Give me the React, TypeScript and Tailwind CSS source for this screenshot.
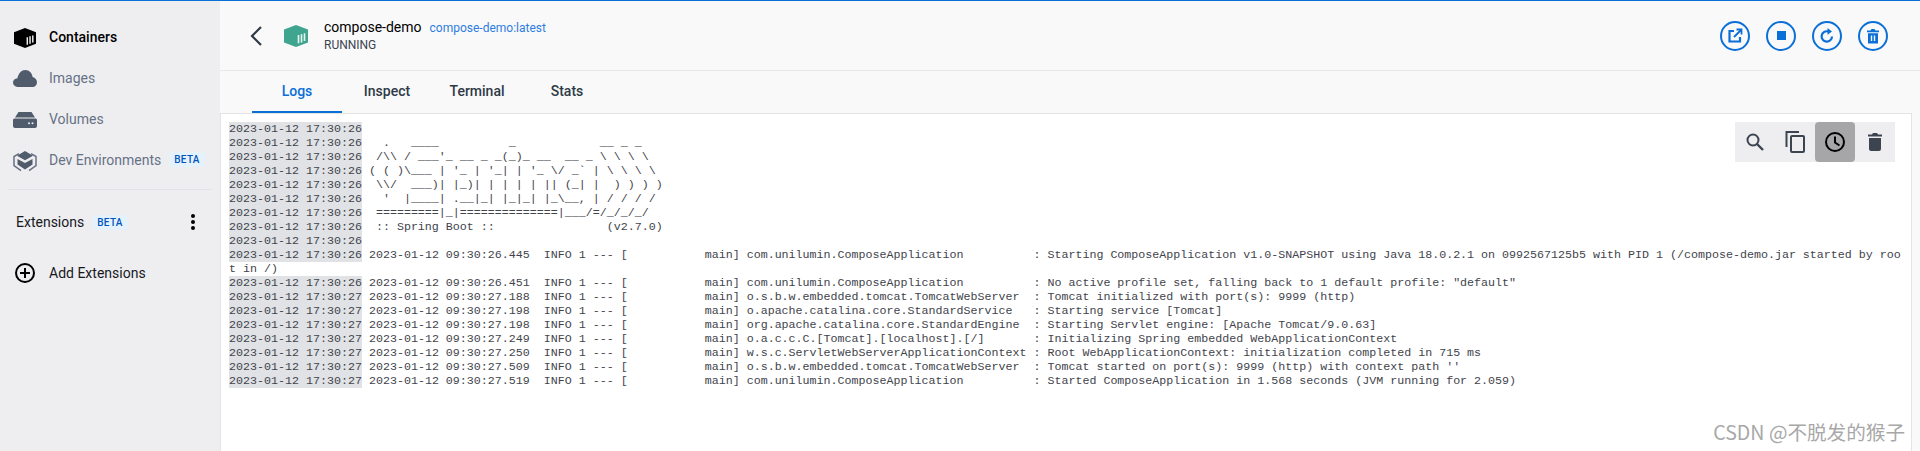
const MONO = "font-['Liberation_Mono','Courier_New',monospace]";

const BANNER = [
  '',
  "  .   ____          _            __ _ _",
  " /\\\\ / ___'_ __ _ _(_)_ __  __ _ \\ \\ \\ \\",
  "( ( )\\___ | '_ | '_| | '_ \\/ _` | \\ \\ \\ \\",
  " \\\\/  ___)| |_)| | | | | || (_| |  ) ) ) )",
  "  '  |____| .__|_| |_|_| |_\\__, | / / / /",
  " =========|_|==============|___/=/_/_/_/",
  " :: Spring Boot ::                (v2.7.0)",
  '',
];

const LOGS: [string, string][] = [
  ['17:30:26', '2023-01-12 09:30:26.445  INFO 1 --- [           main] com.unilumin.ComposeApplication          : Starting ComposeApplication v1.0-SNAPSHOT using Java 18.0.2.1 on 0992567125b5 with PID 1 (/compose-demo.jar started by root in /)'],
  ['17:30:26', '2023-01-12 09:30:26.451  INFO 1 --- [           main] com.unilumin.ComposeApplication          : No active profile set, falling back to 1 default profile: "default"'],
  ['17:30:27', '2023-01-12 09:30:27.188  INFO 1 --- [           main] o.s.b.w.embedded.tomcat.TomcatWebServer  : Tomcat initialized with port(s): 9999 (http)'],
  ['17:30:27', '2023-01-12 09:30:27.198  INFO 1 --- [           main] o.apache.catalina.core.StandardService   : Starting service [Tomcat]'],
  ['17:30:27', '2023-01-12 09:30:27.198  INFO 1 --- [           main] org.apache.catalina.core.StandardEngine  : Starting Servlet engine: [Apache Tomcat/9.0.63]'],
  ['17:30:27', '2023-01-12 09:30:27.249  INFO 1 --- [           main] o.a.c.c.C.[Tomcat].[localhost].[/]       : Initializing Spring embedded WebApplicationContext'],
  ['17:30:27', '2023-01-12 09:30:27.250  INFO 1 --- [           main] w.s.c.ServletWebServerApplicationContext : Root WebApplicationContext: initialization completed in 715 ms'],
  ['17:30:27', "2023-01-12 09:30:27.509  INFO 1 --- [           main] o.s.b.w.embedded.tomcat.TomcatWebServer  : Tomcat started on port(s): 9999 (http) with context path ''"],
  ['17:30:27', '2023-01-12 09:30:27.519  INFO 1 --- [           main] com.unilumin.ComposeApplication          : Started ComposeApplication in 1.568 seconds (JVM running for 2.059)'],
];

function ContainerIcon({ color, bars, width, height }: { color: string; bars: string; width: number; height: number }) {
  return (
    <svg width={width} height={height} viewBox="0 0 24 24" preserveAspectRatio="none">
      <path d="M12 0 L24 5 V19 L12 24 L0 19 V5 Z" fill={color} />
      <path d="M14.5 11 V20 M17.5 10 V19 M20.5 9 V17.5" stroke={bars} strokeWidth="1.6" fill="none" />
    </svg>
  );
}

function CloudIcon() {
  return (
    <svg width="24" height="17" viewBox="0 0 24 17">
      <path d="M4.5 17 C2 17 0 15 0 12.6 C0 10.2 1.9 8.4 4.4 8.2 C5.4 3.4 8.5 0 12.4 0 C16.3 0 19 3 19.6 6.9 C22.2 7.4 24 9.6 24 12.4 C24 15 22 17 19.5 17 Z" fill="#505b6b" />
    </svg>
  );
}

function VolumeIcon() {
  return (
    <svg width="24" height="16" viewBox="0 0 24 16">
      <path d="M5.5 0 H18.5 L22 5.5 H2 Z" fill="#505b6b" />
      <path d="M0 8 C0 7 1 6.5 2 6.5 H22 C23 6.5 24 7 24 8 V14 C24 15.3 23 16 22 16 H2 C1 16 0 15.3 0 14 Z" fill="#505b6b" />
      <circle cx="16" cy="11.2" r="1" fill="#eeeef1" />
      <circle cx="19.5" cy="11.2" r="1" fill="#eeeef1" />
    </svg>
  );
}

function DevEnvIcon() {
  return (
    <svg width="24" height="22" viewBox="0 0 24 22" fill="none">
      <path d="M6 3.6 L1 6.5 V15.5 L8 20.6 M18 3.6 L23 6.5 V15.5 L16 20.6" stroke="#677285" strokeWidth="1.5" />
      <path d="M12 1 L20 5.8 L12 10.2 L4 5.8 Z" fill="#505b6b" />
      <path d="M4.5 9 L12 13 L19.5 9 V14.5 L12 19.5 L4.5 14.5 Z" fill="#505b6b" />
    </svg>
  );
}

function Beta({ className }: { className: string }) {
  return (
    <span className={`${className} rounded-sm bg-[#e5f2fc] px-[5px] py-[1px] text-[10px] leading-[13px] font-medium tracking-[0.3px] text-[#0055bd]`}>
      BETA
    </span>
  );
}

function NavItem({ icon, label, active, beta }: { icon: React.ReactNode; label: string; active?: boolean; beta?: boolean }) {
  return (
    <div className="flex h-[41px] items-center pl-[13px]">
      <div className="flex w-[24px] justify-center pt-[2px]">{icon}</div>
      <span className={`ml-[12px] text-sm ${active ? 'font-medium text-black' : 'text-[#677285]'}`}>{label}</span>
      {beta && <Beta className="ml-[8px]" />}
    </div>
  );
}

function CircleAction({ children }: { children: React.ReactNode }) {
  return (
    <div className="flex h-[30px] w-[30px] items-center justify-center rounded-full border-2 border-[#0b6fd8] text-[#0b6fd8]">
      {children}
    </div>
  );
}

function Tab({ label, active }: { label: string; active?: boolean }) {
  return (
    <div className={`flex h-full w-[90px] items-center justify-center border-b-[2px] text-sm font-medium ${active ? 'border-[#0b6fd8] text-[#0b6fd8]' : 'border-transparent text-[#2f3a46]'}`}>
      {label}
    </div>
  );
}

export default function App() {
  return (
    <div className="flex h-[451px] w-[1920px] flex-col overflow-hidden bg-white font-['Roboto',sans-serif]">
      <div className="h-px bg-[#0b6fd8]" />
      <div className="flex min-h-0 flex-1">
        {/* Sidebar */}
        <aside className="w-[220px] shrink-0 bg-[#eeeef1] pt-[15px]">
          <NavItem active label="Containers" icon={<ContainerIcon color="#000000" bars="#eeeef1" width={22} height={20} />} />
          <NavItem label="Images" icon={<CloudIcon />} />
          <NavItem label="Volumes" icon={<VolumeIcon />} />
          <NavItem beta label="Dev Environments" icon={<DevEnvIcon />} />
          <div className="mx-[8px] mt-[9px] h-px bg-[#e1e2e6]" />
          <div className="mt-[22px] flex h-[20px] items-center pl-[16px]">
            <span className="text-sm text-[#17191e]">Extensions</span>
            <Beta className="ml-[8px]" />
            <svg className="ml-[62px]" width="6" height="18" viewBox="0 0 6 18">
              <circle cx="3" cy="3" r="2" fill="#000" />
              <circle cx="3" cy="9" r="2" fill="#000" />
              <circle cx="3" cy="15" r="2" fill="#000" />
            </svg>
          </div>
          <div className="mt-[31px] flex h-[20px] items-center pl-[15px]">
            <svg width="20" height="20" viewBox="0 0 20 20" fill="none" stroke="#000" strokeWidth="2">
              <circle cx="10" cy="10" r="9" />
              <path d="M10 5 V15 M5 10 H15" />
            </svg>
            <span className="ml-[14px] text-sm text-[#17191e]">Add Extensions</span>
          </div>
        </aside>

        {/* Main */}
        <main className="flex min-w-0 flex-1 flex-col bg-[#f9f9fa]">
          <header className="flex h-[70px] shrink-0 items-center border-b border-[#e9e9ea] pr-[32px]">
            <svg className="ml-[30px]" width="12" height="20" viewBox="0 0 12 20" fill="none" stroke="#2f3a46" strokeWidth="2.2">
              <path d="M11 1 L2 10 L11 19" />
            </svg>
            <div className="ml-[22px]">
              <ContainerIcon color="#3fa58f" bars="#e9f5f2" width={24} height={22} />
            </div>
            <div className="ml-[16px] pb-[2px]">
              <div className="flex items-baseline">
                <span className="text-sm leading-[20px] text-black">compose-demo</span>
                <span className="ml-[8px] text-xs text-[#2f7de0]">compose-demo:latest</span>
              </div>
              <div className="text-xs leading-[16px] text-[#3c4450]">RUNNING</div>
            </div>
            <div className="ml-auto flex gap-[16px]">
              <CircleAction>
                <svg width="16" height="16" viewBox="0 0 16 16" fill="none" stroke="currentColor" strokeWidth="2.2">
                  <path d="M7 3 H2.5 V13.5 H13 V9" />
                  <path d="M7 9 L14 2 M9.5 1.5 H14.5 V6.5" strokeWidth="1.8" />
                </svg>
              </CircleAction>
              <CircleAction>
                <div className="h-[9px] w-[9px] bg-[#0b6fd8]" />
              </CircleAction>
              <CircleAction>
                <svg width="16" height="16" viewBox="0 0 16 16" fill="none" stroke="currentColor" strokeWidth="2.2">
                  <path d="M9 3.4 A5.2 5.2 0 1 0 13 8.5" />
                  <path d="M8.5 0 L13 3.4 L8.5 6.8 Z" fill="currentColor" stroke="none" />
                </svg>
              </CircleAction>
              <CircleAction>
                <svg width="14" height="16" viewBox="0 0 14 16">
                  <path d="M1 2.5 H4.5 L5.5 1 H8.5 L9.5 2.5 H13 V4.2 H1 Z M2 5.2 H12 V15.5 H2 Z" fill="currentColor" />
                  <path d="M5.5 7.5 V13 M8.5 7.5 V13" stroke="#f9f9fa" strokeWidth="1.4" />
                </svg>
              </CircleAction>
            </div>
          </header>

          <nav className="flex h-[42px] shrink-0 pl-[32px]">
            <Tab active label="Logs" />
            <Tab label="Inspect" />
            <Tab label="Terminal" />
            <Tab label="Stats" />
          </nav>

          {/* Log panel */}
          <div className="mr-[8px] min-h-0 flex-1 border-t border-r border-l border-[#e4e4e6] bg-white">
            <div className="relative h-full pt-[8px] pl-[8px]">
              <div className={`w-[1676px] text-[11.67px] leading-[14px] break-all whitespace-pre-wrap text-[#3f444c] ${MONO}`}>
                {BANNER.map((text, i) => (
                  <div key={i} className="h-[14px]">
                    <span className="inline-block h-[14px] bg-[#e1e2e6] align-top">2023-01-12 17:30:26</span> {text}
                  </div>
                ))}
                {LOGS.map(([time, text], i) => (
                  <div key={i}>
                    <span className="inline-block h-[14px] bg-[#e1e2e6] align-top">2023-01-12 {time}</span> {text}
                  </div>
                ))}
              </div>
              {/* Toolbar floats over the log output */}
              <div className="absolute top-[8px] right-[16px] flex h-[40px] w-[160px] bg-[#eeeef1]">
                <div className="flex w-[40px] items-center justify-center">
                  <svg width="18" height="18" viewBox="0 0 18 18" fill="none" stroke="#3c4450">
                    <circle cx="7" cy="7" r="5.5" strokeWidth="2" />
                    <path d="M11 11 L17 17" strokeWidth="2.4" />
                  </svg>
                </div>
                <div className="flex w-[40px] items-center justify-center">
                  <svg width="20" height="22" viewBox="0 0 20 22" fill="none" stroke="#3c4450" strokeWidth="2">
                    <path d="M14 1 H1.5 V16" />
                    <rect x="6" y="5" width="13" height="16" rx="1" />
                  </svg>
                </div>
                <div className="flex w-[40px] items-center justify-center rounded bg-[#a6a6a8]">
                  <svg width="20" height="20" viewBox="0 0 20 20" fill="none" stroke="#000" strokeWidth="2">
                    <circle cx="10" cy="10" r="9" />
                    <path d="M10 4.5 V10.5 L14.5 13.5" />
                  </svg>
                </div>
                <div className="flex w-[40px] items-center justify-center">
                  <svg width="16" height="20" viewBox="0 0 16 20" fill="#3c4450">
                    <path d="M1 2.5 H5 L6 1 H10 L11 2.5 H15 V4.5 H1 Z M2 6 H14 V17 C14 18 13 19 12 19 H4 C3 19 2 18 2 17 Z" />
                  </svg>
                </div>
              </div>
              <div className="absolute right-[6px] bottom-[7px] font-['Noto_Sans_CJK_SC',sans-serif] text-[19.6px] leading-[24px] text-[#a8a8a8]">CSDN @不脱发的猴子</div>
            </div>
          </div>
        </main>
      </div>
    </div>
  );
}
